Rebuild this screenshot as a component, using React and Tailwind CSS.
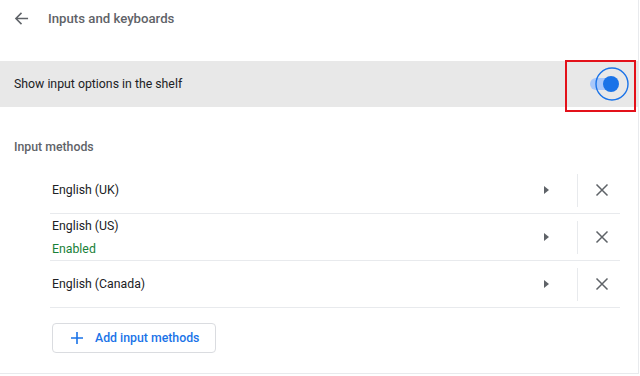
import React from "react";

const methods = [
  { name: "English (UK)" },
  { name: "English (US)", status: "Enabled" },
  { name: "English (Canada)" },
];

const MethodRow = ({ name, status }) => (
  <div className="flex items-center h-[47px] border-b border-[#e8eaed]">
    <div className="flex-1 pl-[2px]">
      <div className="text-[12.3px] leading-[20px] text-[#202124]">{name}</div>
      {status && (
        <div className="text-[12.3px] leading-[20px] text-[#188038] mt-[3px]">
          {status}
        </div>
      )}
    </div>
    <div className="w-[36px] flex justify-start pl-[3px]">
      <svg width="5" height="8" viewBox="0 0 5 8">
        <path d="M0 0 L5 4 L0 8 Z" fill="#5f6368" />
      </svg>
    </div>
    <div className="w-px h-[33px] bg-[#e8eaed]" />
    <div className="w-[42px] flex justify-center pl-[6px]">
      <svg width="14" height="14" viewBox="0 0 14 14">
        <path d="M1.5 1.5 L12.5 12.5 M12.5 1.5 L1.5 12.5" stroke="#5f6368" strokeWidth="1.5" />
      </svg>
    </div>
  </div>
);

export default function App() {
  return (
    <div
      className="relative w-[640px] h-[376px] bg-white overflow-hidden"
      style={{ fontFamily: "Roboto, 'Liberation Sans', sans-serif" }}
    >
      <div className="w-[639px] h-[374px] border-r border-b border-[#e8eaed]">
        {/* header */}
        <div className="h-[61px] flex items-start pt-[9px]">
          <div className="w-[48px] flex justify-start pl-[14px] pt-[2px]">
            <svg width="15" height="15" viewBox="0 0 16 16">
              <path d="M15 8 H2 M8 2 L2 8 L8 14" stroke="#5f6368" strokeWidth="1.6" fill="none" />
            </svg>
          </div>
          <div className="text-[13.2px] leading-[20px] font-medium text-[#5f6368]">
            Inputs and keyboards
          </div>
        </div>

        {/* shelf option */}
        <div className="h-[46px] bg-[#e8e8e8] flex items-center pl-[14px] pr-[6px]">
          <div className="flex-1 text-[12.3px] text-[#202124]">
            Show input options in the shelf
          </div>
          <svg width="44" height="40" viewBox="0 0 44 40">
            <rect x="2" y="14" width="28" height="12" rx="6" fill="#a8c7fa" />
            <circle cx="23" cy="20" r="8" fill="#1a73e8" />
            <circle cx="24" cy="20" r="16" fill="none" stroke="#1a73e8" strokeWidth="1.4" />
          </svg>
        </div>

        {/* input methods */}
        <div className="pt-[30px] pl-[14px] text-[12.3px] leading-[20px] font-medium text-[#5f6368]">
          Input methods
        </div>
        <div className="ml-[50px] w-[570px] mt-[10px]">
          {methods.map((m) => (
            <MethodRow key={m.name} {...m} />
          ))}
        </div>
        <div className="ml-[52px] mt-[15px]">
          <button className="h-[30px] w-[164px] border border-[#dadce0] rounded-[4px] flex items-center pl-[18px] gap-[12px] text-[12.3px] font-medium text-[#1a73e8]">
            <svg width="12" height="12" viewBox="0 0 12 12">
              <path d="M6 0 V12 M0 6 H12" stroke="#1a73e8" strokeWidth="1.6" />
            </svg>
            Add input methods
          </button>
        </div>
      </div>

      {/* highlight */}
      <div className="absolute left-[565px] top-[60px] w-[71px] h-[52px] border-2 border-[#e3111a]" />
    </div>
  );
}
